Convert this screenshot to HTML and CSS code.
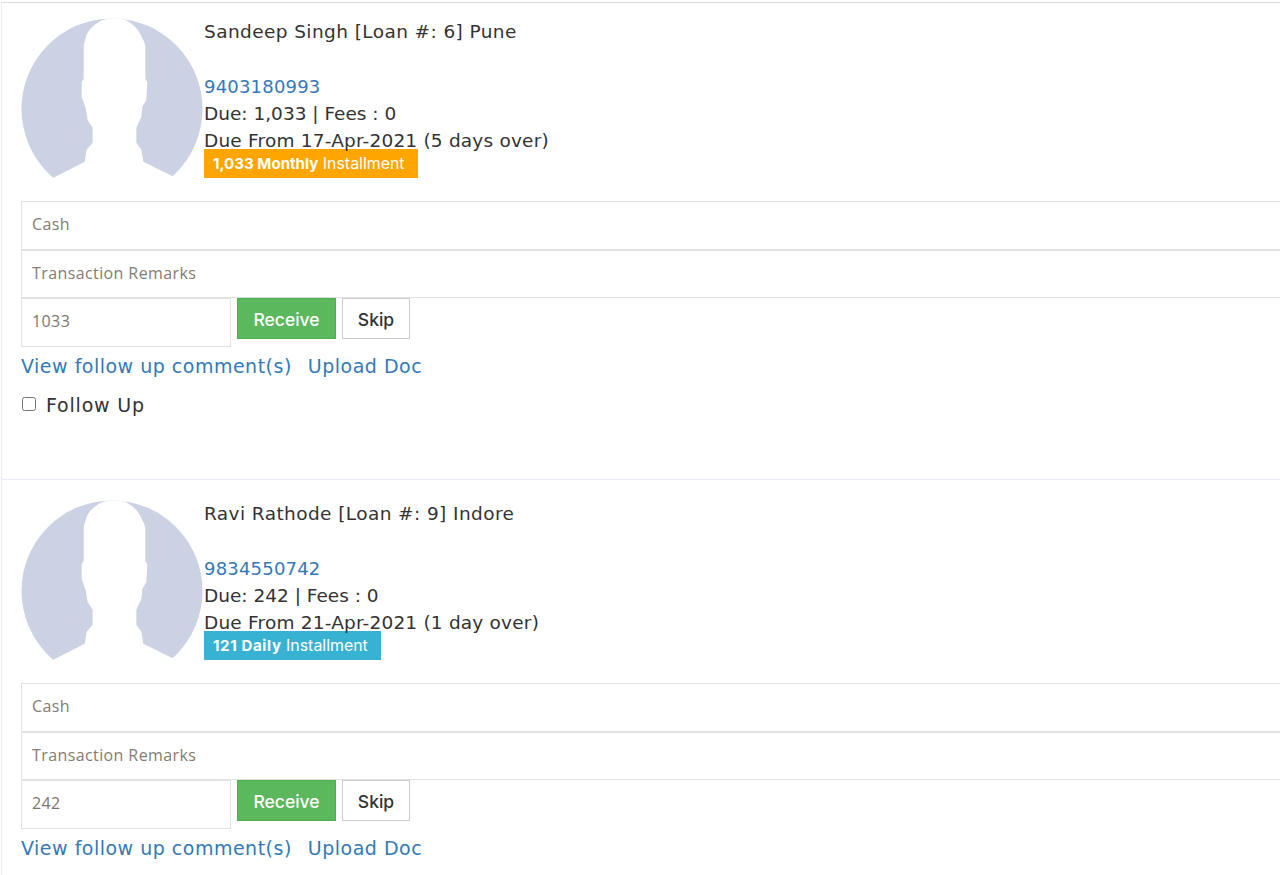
FILE: index.html
```html
<!DOCTYPE html>
<html lang="en">
<head>
<meta charset="utf-8">
<title>Collections</title>
<link rel="stylesheet" href="styles.css">
</head>
<body>
<main class="list">
  <section class="card">
    <div class="head">
      <svg class="avatar" viewBox="0 0 184 165" width="183" height="165" aria-hidden="true">
        <circle class="avatar-bg" cx="91.500" cy="91" r="91"/>
        <path class="avatar-fg" d="M94 0C85 0 80 2 76 5C70 9 66 14 65 20C63 25 63 28 63 32L63 61L61 64L61 79L65 90L67 102L72 110L72 125L66 132L64 144L33 160L20 170L170 170L153 159L123 144L121 132L116 125L116 110L121 99L122 89L126 82L127 64L125 61L125 32C125 28 125 25 122 20C120 14 116 9 111 5C107 2 103 0 94 0Z"/>
      </svg>
      <div class="info">
        <div class="name">Sandeep Singh [Loan #: 6] Pune</div>
        <a class="phone" href="#">9403180993</a>
        <div class="line">Due: 1,033 | Fees : 0</div>
        <div class="line line-from">Due From 17-Apr-2021 (5 days over)</div>
        <div class="badge badge-monthly"><b>1,033 Monthly</b> Installment</div>
      </div>
    </div>
    <div class="form">
      <input class="field" placeholder="Cash">
      <input class="field" placeholder="Transaction Remarks">
      <div class="actions">
        <input class="field amount" value="1033">
        <button class="btn btn-receive">Receive</button>
        <button class="btn btn-skip">Skip</button>
      </div>
    </div>
    <div class="links"><a href="#">View follow up comment(s)</a><a href="#">Upload Doc</a></div>
    <label class="follow"><input type="checkbox" class="check"> Follow Up</label>
  </section>
  <section class="card">
    <div class="head">
      <svg class="avatar" viewBox="0 0 184 165" width="183" height="165" aria-hidden="true">
        <circle class="avatar-bg" cx="91.500" cy="91" r="91"/>
        <path class="avatar-fg" d="M94 0C85 0 80 2 76 5C70 9 66 14 65 20C63 25 63 28 63 32L63 61L61 64L61 79L65 90L67 102L72 110L72 125L66 132L64 144L33 160L20 170L170 170L153 159L123 144L121 132L116 125L116 110L121 99L122 89L126 82L127 64L125 61L125 32C125 28 125 25 122 20C120 14 116 9 111 5C107 2 103 0 94 0Z"/>
      </svg>
      <div class="info">
        <div class="name">Ravi Rathode [Loan #: 9] Indore</div>
        <a class="phone" href="#">9834550742</a>
        <div class="line">Due: 242 | Fees : 0</div>
        <div class="line line-from">Due From 21-Apr-2021 (1 day over)</div>
        <div class="badge badge-daily"><b>121 Daily</b> Installment</div>
      </div>
    </div>
    <div class="form">
      <input class="field" placeholder="Cash">
      <input class="field" placeholder="Transaction Remarks">
      <div class="actions">
        <input class="field amount" value="242">
        <button class="btn btn-receive">Receive</button>
        <button class="btn btn-skip">Skip</button>
      </div>
    </div>
    <div class="links"><a href="#">View follow up comment(s)</a><a href="#">Upload Doc</a></div>
  </section>
</main>
</body>
</html>
```
FILE: styles.css
```css
html, body {
  margin: 0;
  height: 875px;
  overflow: hidden;
  background: #fff;
}
body {
  font-family: "DejaVu Sans", sans-serif;
  color: #333;
}
.list {
  padding: 2px 0 0 1px;
  width: 1320px;
}
.card {
  border-left: 1px solid #e9ebf1;
  border-top: 1px solid #e8ebf3;
  padding: 20px 19px 0;
  height: 477px;
  box-sizing: border-box;
}
.card:first-child {
  border-top-color: #dddde4;
  padding-top: 15px;
}
.head {
  display: flex;
  height: 183px;
}
.avatar {
  flex: none;
  display: block;
}
.avatar-bg { fill: #cad2e3; }
.avatar-fg { fill: #fff; }
.info {
  font-size: 18.500px;
  line-height: 27px;
}
.name {
  height: 55px;
  letter-spacing: 0.410px;
}
.phone, .links a {
  color: #337ab7;
  text-decoration: none;
}
.phone {
  display: block;
  font-size: 18px;
  letter-spacing: 0.200px;
}
.line-from { letter-spacing: 0.200px; }
.badge {
  display: table;
  color: #fff;
  font-family: "Inter", sans-serif;
  font-size: 15.900px;
  line-height: 29px;
  height: 29px;
  padding: 0 13px 0 9px;
  margin-top: -5px;
}
.badge b { font-size: 15.100px; font-weight: 700; }
.badge-monthly { background: #ffa500; }
.badge-daily { background: #38b2d2; }
.badge-daily b { letter-spacing: 0.600px; }
.form {
  display: flex;
  flex-direction: column;
}
.field {
  display: block;
  box-sizing: border-box;
  width: 100%;
  height: 48.500px;
  margin: 0;
  padding: 0 10px 2px;
  border: 1px solid #e2e2e2;
  font-family: "Open Sans", sans-serif;
  font-size: 16px;
  letter-spacing: 0.400px;
  color: #7d766f;
  background: #fff;
  outline: none;
  border-radius: 0;
}
.field::placeholder {
  color: #857b72;
  opacity: 1;
}
.actions {
  display: flex;
  align-items: flex-start;
  gap: 6px;
}
.amount {
  width: 210px;
  flex: none;
}
.btn {
  height: 41px;
  box-sizing: border-box;
  font-family: "Inter", sans-serif;
  font-size: 17.500px;
  padding: 2px 0 0;
  border: 1px solid transparent;
  border-radius: 0;
}
.btn-receive {
  width: 99px;
  background: #5cb85c;
  border-color: #4cae4c;
  color: #fff;
  font-weight: 500;
}
.btn-skip {
  width: 68px;
  background: #fff;
  border-color: #ccc;
  color: #333;
  font-weight: 500;
}
.links {
  display: flex;
  gap: 16px;
  margin-top: 6px;
  font-size: 19px;
  line-height: 26px;
  letter-spacing: 0.500px;
}
.follow {
  display: flex;
  align-items: center;
  gap: 10px;
  margin-top: 13px;
  font-size: 19px;
  line-height: 26px;
  letter-spacing: 0.800px;
}
.check {
  margin: 1px 0 2px 1px;
  width: 14px;
  height: 14px;
}
```
